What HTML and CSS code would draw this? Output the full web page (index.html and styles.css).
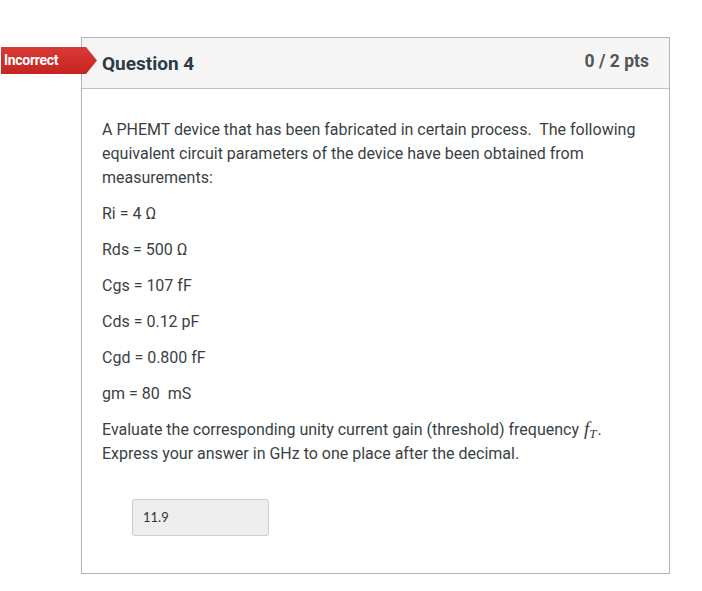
FILE: index.html
```html
<!DOCTYPE html>
<html>
<head>
<meta charset="utf-8">
<link rel="stylesheet" href="styles.css">
</head>
<body>
<div class="card">
  <div class="badge">Incorrect</div>
  <div class="header">
    <h3 class="title">Question 4</h3>
    <div class="pts">0 / 2 pts</div>
  </div>
  <div class="body">
    <p>A PHEMT device that has been fabricated in certain process.&nbsp; The following equivalent circuit parameters of the device have been obtained from measurements:</p>
    <p>Ri = 4 Ω</p>
    <p>Rds = 500 Ω</p>
    <p>Cgs = 107 fF</p>
    <p>Cds = 0.12 pF</p>
    <p>Cgd = 0.800 fF</p>
    <p>gm = 80 &nbsp;mS</p>
    <p>Evaluate the corresponding unity current gain (threshold) frequency <span class="math">f<span class="sub">T</span></span>. Express your answer in GHz to one place after the decimal.</p>
    <div class="answer">
      <div class="input">11.9</div>
    </div>
  </div>
</div>
</body>
</html>
```
FILE: styles.css
```css
html, body {
  margin: 0;
  padding: 0;
  background: #ffffff;
}
body {
  font-family: Roboto, "Liberation Sans", sans-serif;
  color: #3a3f44;
  padding: 37px 0 0 81px;
}
.card {
  position: relative;
  width: 587px;
  height: 535px;
  border: 1px solid #b4b4b4;
  box-sizing: content-box;
}
.badge {
  position: absolute;
  left: -81px;
  top: 9px;
  width: 96px;
  height: 27px;
  box-sizing: border-box;
  padding-left: 3px;
  background: linear-gradient(#d93a36, #c42521);
  color: #ffffff;
  font-weight: 700;
  font-size: 14px;
  line-height: 27px;
  letter-spacing: -0.3px;
  clip-path: polygon(0 0, 85px 0, 96px 13.5px, 85px 27px, 0 27px);
}
.header {
  height: 50px;
  background: #f5f5f5;
  border-bottom: 1px solid #c2c2c2;
  display: flex;
  justify-content: space-between;
  padding: 0 20px 0 20px;
}
.title {
  margin: 0;
  font-size: 19px;
  font-weight: 700;
  line-height: 22px;
  padding-top: 15px;
  color: #2d3b45;
}
.pts {
  font-size: 17.5px;
  font-weight: 700;
  color: #555555;
  line-height: 20px;
  padding-top: 13px;
}
.body {
  padding: 29px 20px 0 20px;
}
.body p {
  margin: 0 0 12px 0;
  font-size: 16px;
  line-height: 24px;
}
.math {
  font-family: "Liberation Serif", "DejaVu Serif", serif;
  font-style: italic;
  font-size: 19px;
  line-height: 0;
  padding: 0 1px;
}
.math .sub {
  font-size: 13px;
  line-height: 0;
  position: relative;
  top: 3px;
}
.answer {
  padding: 21px 0 0 30px;
}
.input {
  width: 137px;
  height: 37px;
  box-sizing: border-box;
  border: 1px solid #c7cdd1;
  border-radius: 3px;
  background: #eeeeee;
  font-family: Lato, "Liberation Sans", sans-serif;
  font-size: 13px;
  color: #333333;
  line-height: 35px;
  padding-left: 10px;
}
```
